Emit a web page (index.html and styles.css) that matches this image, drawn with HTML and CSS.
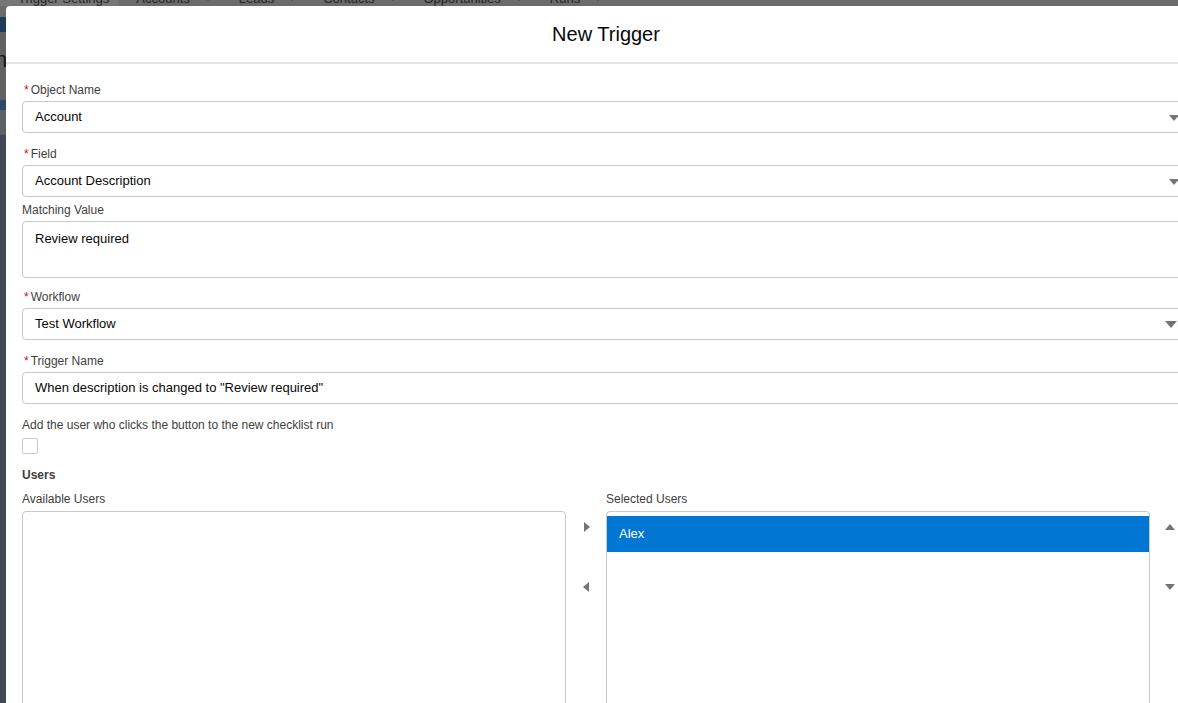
FILE: index.html
```html
<!DOCTYPE html>
<html lang="en">
<head>
  <meta charset="UTF-8" />
  <meta name="viewport" content="width=device-width, initial-scale=1.0" />
  <title>New Trigger</title>
  <link rel="stylesheet" href="styles.css">
</head>
<body>

<div class="page">
  <nav class="topnav">
    <span class="tab active">Trigger Settings</span>
    <span class="tab">Accounts <i class="chev"></i></span>
    <span class="tab">Leads <i class="chev"></i></span>
    <span class="tab">Contacts <i class="chev"></i></span>
    <span class="tab">Opportunities <i class="chev"></i></span>
    <span class="tab">Runs <i class="chev"></i></span>
  </nav>
  <div class="brandbar"></div>
  <div class="pagehead"><span class="pagehead-title">n</span></div>
  <div class="subbar"></div>
  <div class="subhead"></div>
  <div class="pagebody"></div>
</div>

<div class="modal">
  <header class="modal-header">
    <h2>New Trigger</h2>
  </header>

  <div class="modal-body">
    <div class="field">
      <label><abbr>*</abbr>Object Name</label>
      <div class="input select">Account</div>
    </div>

    <div class="field tight">
      <label><abbr>*</abbr>Field</label>
      <div class="input select">Account Description</div>
    </div>

    <div class="field loose">
      <label>Matching Value</label>
      <div class="input textarea">Review required</div>
    </div>

    <div class="field">
      <label><abbr>*</abbr>Workflow</label>
      <div class="input select combo">Test Workflow</div>
    </div>

    <div class="field">
      <label><abbr>*</abbr>Trigger Name</label>
      <div class="input">When description is changed to "Review required"</div>
    </div>

    <div class="field">
      <label class="check-label">Add the user who clicks the button to the new checklist run</label>
      <span class="checkbox"></span>
    </div>

    <div class="users-title">Users</div>

    <div class="dual">
      <div class="dual-col">
        <label>Available Users</label>
        <div class="listbox"></div>
      </div>
      <div class="dual-btns">
        <span class="btn"><i class="tri right"></i></span>
        <span class="btn"><i class="tri left"></i></span>
      </div>
      <div class="dual-col">
        <label>Selected Users</label>
        <div class="listbox">
          <div class="option selected">Alex</div>
        </div>
      </div>
      <div class="dual-btns">
        <span class="btn"><i class="tri up"></i></span>
        <span class="btn"><i class="tri down"></i></span>
      </div>
    </div>
  </div>
</div>

</body>
</html>
```

FILE: styles.css
```css
html, body {
  margin: 0;
  height: 100%;
  overflow: hidden;
}
body {
  font-family: "Liberation Sans", Arial, sans-serif;
  background-color: #424856;
  color: #080707;
  position: relative;
}

/* page under the backdrop, already dimmed */
.page {
  display: flex;
  flex-direction: column;
}
.topnav {
  height: 17px;
  background-color: #6b6b6b;
  display: flex;
  overflow: hidden;
}
.tab {
  display: flex;
  align-items: center;
  height: 15px;
  margin-top: -9px;
  padding: 0 14px;
  font-size: 13px;
  color: #262626;
  white-space: nowrap;
}
.tab.active {
  background-color: #767676;
  padding: 0 10px 0 18px;
  margin-right: 3px;
}
.chev {
  display: inline-block;
  margin-left: 15px;
  border-left: 3px solid transparent;
  border-right: 3px solid transparent;
  border-top: 4px solid #3a3a3a;
}
.brandbar {
  height: 15px;
  background-color: #1f3b58;
}
.pagehead {
  height: 68px;
  background-color: #5f6163;
  display: flex;
  align-items: center;
}
.pagehead-title {
  font-size: 22px;
  color: #151515;
  margin-left: -5px;
  margin-top: -12px;
}
.subbar {
  height: 10px;
  background-color: #2c4a6a;
}
.subhead {
  height: 25px;
  background-color: #5d6166;
}
.pagebody {
  flex: 1;
}

/* modal, lies over the page */
.modal {
  position: absolute;
  top: 6px;
  left: 6px;
  width: 1200px;
  background-color: #ffffff;
  border-radius: 4px 4px 0 0;
  min-height: 800px;
}
.modal-header {
  height: 56px;
  border-bottom: 2px solid #e5e5e5;
  display: flex;
  align-items: center;
  justify-content: center;
}
.modal-header h2 {
  margin: 0;
  font-size: 20px;
  font-weight: normal;
  color: #080707;
  line-height: 24px;
}
.modal-body {
  padding: 17px 16px 16px;
}

.field {
  margin-bottom: 12px;
}
.field.tight {
  margin-bottom: 4px;
}
.field.loose {
  margin-bottom: 10px;
}
label {
  display: block;
  font-size: 12px;
  line-height: 18px;
  color: #3e3e3c;
  margin-bottom: 2px;
}
abbr {
  color: #ea001e;
  margin: 0 2px 0 2px;
  text-decoration: none;
}
.input {
  position: relative;
  height: 30px;
  border: 1px solid #c9c9c9;
  border-radius: 4px;
  padding: 0 12px;
  font-size: 13px;
  line-height: 30px;
  color: #080707;
  white-space: nowrap;
}
.input.textarea {
  height: 47px;
  padding-top: 8px;
  line-height: 18px;
}
.select::after {
  content: "";
  position: absolute;
  right: 10px;
  top: 13px;
  border-left: 5px solid transparent;
  border-right: 5px solid transparent;
  border-top: 6px solid #747474;
}
.combo::after {
  right: 12px;
  top: 12px;
  border-left-width: 6px;
  border-right-width: 6px;
  border-top-width: 7px;
}
.check-label {
  margin-bottom: 4px;
}
.checkbox {
  display: block;
  width: 14px;
  height: 14px;
  border: 1px solid #c9c9c9;
  border-radius: 2px;
  background-color: #ffffff;
}
.users-title {
  font-size: 12px;
  font-weight: bold;
  line-height: 18px;
  color: #3e3e3c;
  margin-bottom: 6px;
}

/* dueling picklist */
.dual {
  display: flex;
}
.dual-col {
  width: 544px;
}
.dual-col label {
  margin-bottom: 3px;
}
.listbox {
  height: 220px;
  border: 1px solid #c9c9c9;
  border-radius: 4px;
  padding: 4px 0;
}
.option {
  height: 36px;
  line-height: 36px;
  padding: 0 12px;
  font-size: 13px;
}
.option.selected {
  background-color: #0176d3;
  color: #ffffff;
}
.dual-btns {
  width: 40px;
  padding-top: 21px;
  display: flex;
  flex-direction: column;
  align-items: center;
  gap: 28px;
}
.btn {
  width: 32px;
  height: 32px;
  display: flex;
  align-items: center;
  justify-content: center;
}
.tri {
  display: block;
  width: 0;
  height: 0;
}
.tri.right {
  border-top: 5px solid transparent;
  border-bottom: 5px solid transparent;
  border-left: 6px solid #747474;
  margin-left: 2px;
}
.tri.left {
  border-top: 5px solid transparent;
  border-bottom: 5px solid transparent;
  border-right: 6px solid #747474;
}
.tri.up {
  border-left: 5px solid transparent;
  border-right: 5px solid transparent;
  border-bottom: 6px solid #747474;
}
.tri.down {
  border-left: 5px solid transparent;
  border-right: 5px solid transparent;
  border-top: 6px solid #747474;
}
```
